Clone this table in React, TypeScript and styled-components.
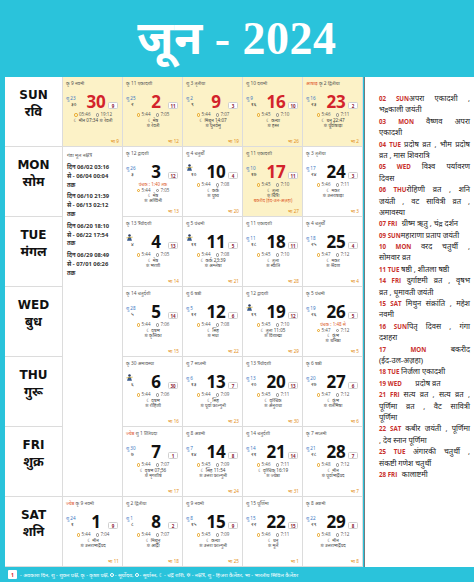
import React from "react";
import styled, { createGlobalStyle } from "styled-components";

const CYAN = "#2ac3db";
const HINDI = `"Noto Sans", "Noto Sans Devanagari", "Lohit Devanagari", "FreeSans", sans-serif`;

const Global = createGlobalStyle`
  html, body { margin: 0; padding: 0; }
  body { width: 474px; height: 582px; overflow: hidden; background: ${CYAN}; font-family: ${HINDI}; }
  * { box-sizing: border-box; }
`;

const Page = styled.div`
  width: 474px;
  height: 582px;
  display: flex;
  flex-direction: column;
  background: ${CYAN};
`;

const Header = styled.header`
  height: 77px;
  display: flex;
  align-items: center;
  justify-content: center;
  padding-bottom: 6px;
  color: #fff;
  font-family: "Liberation Serif", ${HINDI};
  font-size: 46px;
  font-weight: 700;
  letter-spacing: 0.5px;
`;

const Body = styled.div`
  height: 490px;
  display: flex;
  padding-left: 5px;
`;

const Grid = styled.div`
  display: grid;
  grid-template-columns: 58px repeat(5, 60px);
  grid-template-rows: repeat(7, 70px);
  width: 358px;
  background: #fff;
`;

const Divider = styled.div`
  width: 2px;
  background: ${CYAN};
  border-right: 1px solid #6f7b80;
`;

const Events = styled.div`
  flex: 1;
  background: #fff;
  padding: 16px 4px 0 14px;
`;

const DayLabel = styled.div<{ $row: number }>`
  grid-row: ${(p) => p.$row + 1};
  grid-column: 1;
  display: flex;
  flex-direction: column;
  align-items: center;
  justify-content: center;
  padding-bottom: 16px;
  border-right: 1px solid #dcdcdc;
  border-bottom: 1px solid #dcdcdc;
  color: #111;
`;

const DayEn = styled.div`
  font-family: "DejaVu Sans", sans-serif;
  font-weight: 700;
  font-size: 12px;
  line-height: 11px;
`;

const DayHi = styled.div`
  font-size: 13px;
  line-height: 14px;
  margin-top: 3px;
  font-weight: 700;
`;

const Cell = styled.div<{ $row: number; $col: number; $yellow?: boolean }>`
  grid-row: ${(p) => p.$row + 1};
  grid-column: ${(p) => p.$col + 1};
  background: ${(p) => (p.$yellow ? "#fcf2c7" : "#fff")};
  border-right: 1px solid #dcdcdc;
  border-bottom: 1px solid #dcdcdc;
  display: flex;
  flex-direction: column;
  padding: 3px 2px 2px 3px;
  min-width: 0;
  overflow: hidden;
`;

const Tithi = styled.div`
  font-size: 4.8px;
  line-height: 7px;
  color: #555;
  white-space: nowrap;
`;

const Month = styled.span`
  color: #e0542a;
`;

const MainRow = styled.div`
  display: flex;
  align-items: center;
  height: 21px;
  margin-top: 4px;
`;

const Side = styled.div`
  width: 19px;
  display: flex;
  flex-direction: column;
  align-items: flex-start;
  margin-top: -2px;
`;

const Hijri = styled.div`
  font-size: 4.6px;
  line-height: 6px;
  color: #3b78c2;
  white-space: nowrap;
`;

const DevNum = styled.div`
  font-size: 5.2px;
  line-height: 6px;
  color: #333;
  padding-left: 5px;
`;

const DateNum = styled.div<{ $red?: boolean }>`
  min-width: 22px;
  text-align: center;
  font-family: "Open Sans", sans-serif;
  font-weight: 700;
  font-size: 17px;
  line-height: 20px;
  color: ${(p) => (p.$red ? "#d3232b" : "#111")};
  letter-spacing: -0.3px;
`;

const Badge = styled.div`
  align-self: flex-end;
  margin: 0 0 3px 1px;
  min-width: 10px;
  height: 7px;
  padding: 0 1.5px;
  border: 0.5px solid #cfcfcf;
  border-radius: 1.5px;
  background: #fff;
  font-family: "Open Sans", sans-serif;
  font-size: 4.5px;
  line-height: 6px;
  text-align: center;
  color: #8a2035;
  font-weight: 700;
`;

const Note = styled.div`
  font-size: 4.5px;
  line-height: 5.5px;
  color: #dc5a1f;
  white-space: nowrap;
  text-align: center;
`;

const SunRow = styled.div`
  display: flex;
  justify-content: center;
  gap: 5px;
  font-family: "Open Sans", sans-serif;
  font-size: 4.5px;
  line-height: 5.5px;
  color: #555;
  white-space: nowrap;
`;

const SunItem = styled.span`
  display: inline-flex;
  align-items: center;
  gap: 1.5px;
`;

const Dot = styled.span<{ $c: string }>`
  display: inline-block;
  width: 3.5px;
  height: 3.5px;
  border-radius: 50%;
  border: 0.7px solid ${(p) => p.$c};
`;

const Info = styled.div`
  font-size: 4.6px;
  line-height: 5.3px;
  color: #444;
  text-align: center;
  white-space: nowrap;
`;

const Sym = styled.span`
  font-family: "DejaVu Sans", sans-serif;
  color: #666;
  margin-right: 1px;
  line-height: 0;
`;

const Bha = styled.div`
  margin-top: auto;
  text-align: right;
  font-size: 4.6px;
  line-height: 6px;
  padding-right: 1px;
  color: #e39023;
`;

const NakPanel = styled.div`
  grid-row: 2 / span 5;
  grid-column: 2;
  border-right: 1px solid #dcdcdc;
  border-bottom: 1px solid #dcdcdc;
  padding: 5px 2px 0 4px;
`;

const NakTitle = styled.div`
  font-size: 5px;
  line-height: 7px;
  color: #555;
  margin-bottom: 4px;
`;

const NakBlock = styled.div`
  font-size: 5.8px;
  line-height: 8.8px;
  font-weight: 700;
  color: #333;
  margin-bottom: 3px;
  white-space: nowrap;
`;

const EventLine = styled.div<{ $just?: boolean }>`
  font-size: 7.6px;
  line-height: 11.4px;
  height: 11.4px;
  color: #222;
  text-align: ${(p) => (p.$just ? "justify" : "left")};
  text-align-last: ${(p) => (p.$just ? "justify" : "auto")};
`;

const EvDate = styled.span<{ $gap: number }>`
  font-family: "Open Sans", sans-serif;
  font-weight: 700;
  font-size: 6.2px;
  line-height: 0;
  color: #c9302c;
  margin-right: ${(p) => p.$gap}px;
`;

const Footer = styled.footer`
  height: 15px;
  display: flex;
  align-items: center;
  padding-left: 8px;
  color: #fff;
  font-size: 5.4px;
  white-space: nowrap;
`;

const KeyBox = styled.span`
  display: inline-flex;
  align-items: center;
  justify-content: center;
  width: 9px;
  height: 9px;
  margin-right: 3px;
  background: #fff;
  color: #d3232b;
  font-family: "Open Sans", sans-serif;
  font-size: 5px;
  font-weight: 700;
  border-radius: 1px;
`;

const FootDot = styled.span`
  display: inline-block;
  width: 4px;
  height: 4px;
  border-radius: 50%;
  border: 0.7px solid #fff;
  margin: 0 1px;
`;

type Day = {
  d: number;
  t: string;
  m?: string;
  h?: string;
  ic?: boolean;
  b: string;
  r: string;
  s: string;
  moon: string;
  nak: string;
  bha: number;
  note?: string;
  ev?: string;
  inline?: boolean;
};

const days: Day[] = [
  { d: 30, t: "कृ 9 नवमी", h: "शु 23", b: "9", r: "05:46", s: "19:12", moon: "मीन 07:34", nak: "रेवती", bha: 9, inline: true },
  { d: 1, m: "ज्येष्ठ", t: "कृ 9 नवमी", h: "शु 24", b: "9", r: "5:44", s: "7:04", moon: "मीन", nak: "उत्तराभाद्रपद", bha: 11 },
  { d: 2, t: "कृ 11 एकादशी", h: "शु 25", b: "11", r: "5:44", s: "7:05", moon: "मेष", nak: "रेवती", bha: 12 },
  { d: 3, t: "कृ 12 द्वादशी", h: "शु 26", b: "12", note: "पंचक : 1:40 तक", r: "5:44", s: "7:05", moon: "मेष", nak: "अश्विनी", bha: 13 },
  { d: 4, t: "कृ 13 त्रयोदशी", ic: true, b: "13", r: "5:44", s: "7:05", moon: "मेष", nak: "भरणी", bha: 14 },
  { d: 5, t: "कृ 14 चतुर्दशी", h: "शु 28", b: "14", r: "5:44", s: "7:06", moon: "वृषभ", nak: "कृत्तिका", bha: 15 },
  { d: 6, t: "कृ 30 अमावस्या", ic: true, b: "30", r: "5:44", s: "7:06", moon: "वृषभ", nak: "रोहिणी", bha: 16 },
  { d: 7, m: "ज्येष्ठ", t: "शु 1 प्रतिपदा", h: "शु 30", b: "1", r: "5:44", s: "7:07", moon: "वृषभ 07:56", nak: "मृगशीर्ष", bha: 17 },
  { d: 8, t: "शु 2 द्वितीया", h: "शु 1", b: "2", r: "5:44", s: "7:07", moon: "मिथुन", nak: "आर्द्रा", bha: 18 },
  { d: 9, t: "शु 3 तृतीया", h: "शु 2", b: "3", r: "5:44", s: "7:07", moon: "मिथुन 14:07", nak: "पुनर्वसु", bha: 19 },
  { d: 10, t: "शु 4 चतुर्थी", ic: true, b: "4", r: "5:44", s: "7:08", moon: "कर्क", nak: "पुष्य", bha: 20 },
  { d: 11, t: "शु 5 पंचमी", ic: true, b: "5", r: "5:44", s: "7:08", moon: "कर्क 23:39", nak: "अश्लेषा", bha: 21 },
  { d: 12, t: "शु 6 षष्ठी", h: "शु 5", b: "6", r: "5:44", s: "7:08", moon: "सिंह", nak: "मघा", bha: 22 },
  { d: 13, t: "शु 7 सप्तमी", h: "शु 6", b: "7", r: "5:44", s: "7:09", moon: "सिंह", nak: "पूर्वा फाल्गुनी", bha: 23 },
  { d: 14, t: "शु 8 अष्टमी", h: "शु 7", b: "8", r: "5:45", s: "7:09", moon: "सिंह 11:54", nak: "उत्तरा फाल्गुनी", bha: 24 },
  { d: 15, t: "शु 9 नवमी", h: "शु 8", b: "9", r: "5:45", s: "7:09", moon: "कन्या", nak: "उत्तरा फाल्गुनी", bha: 25 },
  { d: 16, t: "शु 10 दशमी", h: "शु 9", b: "10", r: "5:45", s: "7:10", moon: "कन्या", nak: "हस्त", bha: 26 },
  { d: 17, t: "शु 11 एकादशी", h: "शु 10", b: "11", r: "5:45", s: "7:10", moon: "तुला", nak: "चित्रा", bha: 27, ev: "बकरीद (ईद-उल-अज़हा)" },
  { d: 18, t: "शु 11 एकादशी", h: "शु 11", b: "11", r: "5:45", s: "7:10", moon: "तुला", nak: "स्वाति", bha: 28 },
  { d: 19, t: "शु 12 द्वादशी", ic: true, b: "12", r: "5:45", s: "7:10", moon: "तुला 11:05", nak: "विशाखा", bha: 29 },
  { d: 20, t: "शु 13 त्रयोदशी", h: "शु 13", b: "13", r: "5:45", s: "7:11", moon: "वृश्चिक", nak: "अनुराधा", bha: 30 },
  { d: 21, t: "शु 14 चतुर्दशी", h: "शु 14", b: "14", r: "5:46", s: "7:11", moon: "वृश्चिक 16:19", nak: "ज्येष्ठा", bha: 31 },
  { d: 22, t: "शु 15 पूर्णिमा", h: "शु 15", b: "15", r: "5:46", s: "7:11", moon: "धनु", nak: "मूल", bha: 1 },
  { d: 23, m: "आषाढ़", t: "कृ 2 द्वितीया", h: "शु 16", b: "2", r: "5:46", s: "7:11", moon: "धनु 22:47", nak: "पूर्वाषाढ़ा", bha: 2 },
  { d: 24, t: "कृ 3 तृतीया", h: "शु 17", b: "3", r: "5:46", s: "7:11", moon: "मकर", nak: "उत्तराषाढ़ा", bha: 3 },
  { d: 25, t: "कृ 4 चतुर्थी", h: "शु 18", b: "4", r: "5:47", s: "7:12", moon: "मकर", nak: "श्रवण", bha: 4 },
  { d: 26, t: "कृ 5 पंचमी", h: "शु 19", b: "5", note: "पंचक : 1:48 से", r: "5:47", s: "7:12", moon: "कुंभ", nak: "धनिष्ठा", bha: 5 },
  { d: 27, t: "कृ 6 षष्ठी", h: "शु 20", b: "6", r: "5:47", s: "7:12", moon: "कुंभ", nak: "शतभिषा", bha: 6 },
  { d: 28, t: "कृ 7 सप्तमी", h: "शु 21", b: "7", r: "5:48", s: "7:12", moon: "मीन", nak: "पूर्वाभाद्रपद", bha: 7 },
  { d: 29, t: "कृ 8 अष्टमी", h: "शु 22", b: "8", r: "5:48", s: "7:12", moon: "मीन", nak: "उत्तराभाद्रपद", bha: 8 },
];

const dayLabels: [string, string][] = [
  ["SUN", "रवि"],
  ["MON", "सोम"],
  ["TUE", "मंगल"],
  ["WED", "बुध"],
  ["THU", "गुरू"],
  ["FRI", "शुक्र"],
  ["SAT", "शनि"],
];

const nakBlocks = [
  ["दिन 06/02 03:16", "से - 06/04 00:04", "तक"],
  ["दिन 06/10 21:39", "से - 06/13 02:12", "तक"],
  ["दिन 06/20 18:10", "से - 06/22 17:54", "तक"],
  ["दिन 06/29 08:49", "से - 07/01 06:26", "तक"],
];

type Ev = { l: string; sp: boolean; gap?: number; lines: string[] };

const events: Ev[] = [
  { l: "02 SUN", sp: false, lines: ["अपरा एकादशी ,", "भद्रकाली जयंती"] },
  { l: "03 MON", sp: true, lines: ["वैष्णव अपरा", "एकादशी"] },
  { l: "04 TUE", sp: true, lines: ["प्रदोष व्रत , भौम प्रदोष", "व्रत , मास शिवरात्रि"] },
  { l: "05 WED", sp: true, lines: ["विश्व पर्यावरण", "दिवस"] },
  { l: "06 THU", sp: false, lines: ["रोहिणी व्रत , शनि", "जयंती , वट सावित्री व्रत ,", "अमावस्या"] },
  { l: "07 FRI", sp: true, gap: 3, lines: ["ग्रीष्म ऋतु , चंद्र दर्शन"] },
  { l: "09 SUN", sp: false, lines: ["महाराणा प्रताप जयंती"] },
  { l: "10 MON", sp: true, lines: ["वरद चतुर्थी ,", "सोमवार व्रत"] },
  { l: "11 TUE", sp: true, lines: ["षष्ठी , शीतला षष्ठी"] },
  { l: "14 FRI", sp: true, lines: ["दुर्गाष्टमी व्रत , वृषभ", "व्रत , धूमावती जयंती"] },
  { l: "15 SAT", sp: true, lines: ["मिथुन संक्रांति , महेश", "नवमी"] },
  { l: "16 SUN", sp: false, lines: ["पितृ दिवस , गंगा", "दशहरा"] },
  { l: "17 MON", sp: true, lines: ["बकरीद", "(ईद-उल-अज़हा)"] },
  { l: "18 TUE", sp: true, lines: ["निर्जला एकादशी"] },
  { l: "19 WED", sp: true, gap: 12, lines: ["प्रदोष व्रत"] },
  { l: "21 FRI", sp: true, lines: ["सत्य व्रत , सत्य व्रत ,", "पूर्णिमा व्रत , वैट सावित्री", "पूर्णिमा"] },
  { l: "22 SAT", sp: true, lines: ["कबीर जयंती , पूर्णिमा", ", देव स्नान पूर्णिमा"] },
  { l: "25 TUE", sp: true, lines: ["अंगारकी चतुर्थी ,", "संकष्टी गणेश चतुर्थी"] },
  { l: "28 FRI", sp: true, gap: 3, lines: ["कालाष्टमी"] },
];

const DEV = "०१२३४५६७८९";
const toDev = (n: number) =>
  String(n)
    .split("")
    .map((c) => DEV[+c])
    .join("");

const place = (d: number): [number, number] => {
  if (d === 30) return [0, 1];
  if (d === 1) return [6, 1];
  return [(d - 2) % 7, Math.floor((d - 2) / 7) + 2];
};

const FigureIcon = () => (
  <svg width="7" height="7" viewBox="0 0 10 10">
    <circle cx="5" cy="2.3" r="1.8" fill="#2c3e66" />
    <path d="M1.5 9.5 L3 5 Q5 3.8 7 5 L8.5 9.5 Z" fill="#3a5a8a" />
    <path d="M0.5 5.5 L9.5 4.5" stroke="#c9a227" strokeWidth="1" />
  </svg>
);

const DayCell = ({ day }: { day: Day }) => {
  const [row, col] = place(day.d);
  const isSun = row === 0;
  const red = isSun || day.d === 17;
  return (
    <Cell $row={row} $col={col} $yellow={red}>
      <Tithi>
        {day.m && <Month>{day.m} </Month>}
        {day.t}
      </Tithi>
      <MainRow>
        <Side>
          {day.ic ? <FigureIcon /> : <Hijri>{day.h}</Hijri>}
          <DevNum>{toDev(day.d)}</DevNum>
        </Side>
        <DateNum $red={red}>{day.d}</DateNum>
        <Badge>{day.b}</Badge>
      </MainRow>
      {day.note && <Note>{day.note}</Note>}
      <SunRow>
        <SunItem>
          <Dot $c="#e8a21c" />
          {day.r}
        </SunItem>
        <SunItem>
          <Dot $c="#8a8a8a" />
          {day.s}
        </SunItem>
      </SunRow>
      {day.inline ? (
        <Info>
          <Sym>☾</Sym>
          {day.moon} <Sym>✲</Sym>
          {day.nak}
        </Info>
      ) : (
        <>
          <Info>
            <Sym>☾</Sym>
            {day.moon}
          </Info>
          <Info>
            <Sym>✲</Sym>
            {day.nak}
          </Info>
        </>
      )}
      {day.ev && <Note>{day.ev}</Note>}
      <Bha>भा {day.bha}</Bha>
    </Cell>
  );
};

export default function App() {
  return (
    <Page>
      <Global />
      <Header>जून - 2024</Header>
      <Body>
        <Grid>
          {dayLabels.map(([en, hi], i) => (
            <DayLabel key={en} $row={i}>
              <DayEn>{en}</DayEn>
              <DayHi>{hi}</DayHi>
            </DayLabel>
          ))}
          <NakPanel>
            <NakTitle>गंडा मूल नक्षत्र</NakTitle>
            {nakBlocks.map((b, i) => (
              <NakBlock key={i}>
                {b.map((l, j) => (
                  <div key={j}>{l}</div>
                ))}
              </NakBlock>
            ))}
          </NakPanel>
          {days.map((d) => (
            <DayCell key={d.d} day={d} />
          ))}
        </Grid>
        <Divider />
        <Events>
          {events.map((e) =>
            e.lines.map((line, i) => (
              <EventLine key={e.l + i} $just={i < e.lines.length - 1}>
                {i === 0 && (
                  <EvDate $gap={e.gap ?? 0}>
                    {e.l}
                    {e.sp ? " " : ""}
                  </EvDate>
                )}
                {line}
              </EventLine>
            ))
          )}
        </Events>
      </Body>
      <Footer>
        <KeyBox>1</KeyBox>- अवकाश दिन, शु - शुक्ल पक्ष, कृ - कृष्ण पक्ष, <FootDot /> - सूर्योदय, <FootDot /> - सूर्यास्त, ☾ - चंद्र राशि, ✲ - नक्षत्र, शु - हिजरा कैलेंडर, भा - भारतीय सिविल कैलेंडर
      </Footer>
    </Page>
  );
}
